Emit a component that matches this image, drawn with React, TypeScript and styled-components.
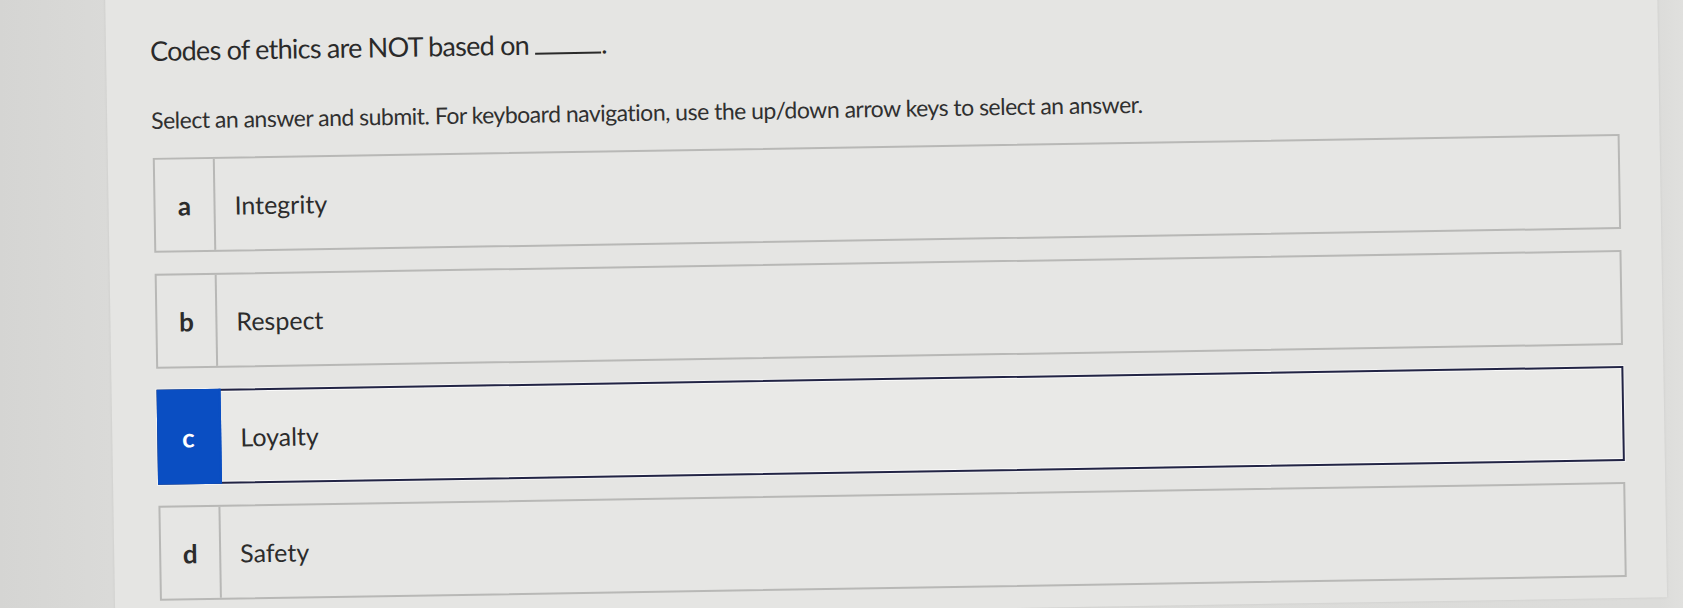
import React from 'react';
import styled, { createGlobalStyle } from 'styled-components';

const GlobalStyle = createGlobalStyle`
    html, body {
        margin: 0;
        padding: 0;
        width: 1683px;
        height: 608px;
        overflow: hidden;
        background: #d8d8d6;
        font-family: Lato, 'Liberation Sans', sans-serif;
    }
`;

const Screen = styled.div`
    display: flex;
    width: 1683px;
    height: 608px;
    overflow: hidden;
    background: linear-gradient(90deg, #d5d5d3 0px, #dadad8 110px, #dcdcda 1660px, #e0e0de 1683px);
`;

const Sheet = styled.div`
    flex: none;
    margin: -30px 0 0 110px;
    width: 1552px;
    height: 640px;
    box-sizing: border-box;
    padding: 52px 0 0 44px;
    background: #e5e5e3;
    box-shadow: 0 0 3px rgba(0, 0, 0, 0.08);
    transform: rotate(-0.93deg);
    transform-origin: 50% 50%;
`;

const Question = styled.div`
    color: #2a2a2a;
    font-size: 27px;
    line-height: 34px;
    font-weight: 400;
    letter-spacing: -0.75px;
`;

const Blank = styled.span`
    display: inline-block;
    width: 66px;
    height: 24px;
    margin-left: 6px;
    border-bottom: 2px solid #2a2a2a;
    vertical-align: baseline;
`;

const Hint = styled.div`
    margin-top: 38px;
    color: #303030;
    font-size: 23px;
    line-height: 29px;
    font-weight: 400;
    letter-spacing: -0.5px;
`;

const Options = styled.div`
    display: flex;
    flex-direction: column;
    gap: 21px;
    margin: 23px 0 0 1px;
    width: 1467px;
`;

const Option = styled.div<{ selected?: boolean }>`
    display: flex;
    align-items: stretch;
    height: 95px;
    box-sizing: border-box;
    border: 2px solid ${(p) => (p.selected ? '#222445' : '#b8b8b6')};
    background: ${(p) => (p.selected ? '#e9e9e7' : '#e6e6e4')};
    box-shadow: ${(p) =>
        p.selected ? 'inset 0 0 0 1px #fbfbfb, 0 0 0 1px #f4f4f4' : 'none'};
`;

const Letter = styled.div<{ selected?: boolean }>`
    display: flex;
    align-items: center;
    justify-content: center;
    flex: none;
    width: ${(p) => (p.selected ? '62px' : '58px')};
    margin: ${(p) => (p.selected ? '-2px 0 -2px -2px' : '0')};
    border-right: 2px solid ${(p) => (p.selected ? '#0a4ec2' : '#b8b8b6')};
    background: ${(p) => (p.selected ? '#0a4ec2' : 'transparent')};
    color: ${(p) => (p.selected ? '#ffffff' : '#2c2c2c')};
    font-size: 26px;
    font-weight: 700;
`;

const Label = styled.div`
    display: flex;
    align-items: center;
    padding-left: 19px;
    color: #2c2c2c;
    font-size: 25px;
    font-weight: 400;
`;

const answers = [
    { key: 'a', text: 'Integrity' },
    { key: 'b', text: 'Respect' },
    { key: 'c', text: 'Loyalty' },
    { key: 'd', text: 'Safety' },
];

function App() {
    const selected = 'c';

    return (
        <Screen>
            <GlobalStyle />
            <Sheet>
                <Question>
                    Codes of ethics are NOT based on
                    <Blank />.
                </Question>
                <Hint>
                    Select an answer and submit. For keyboard navigation, use the up/down arrow keys to select an answer.
                </Hint>
                <Options>
                    {answers.map((a) => (
                        <Option key={a.key} selected={a.key === selected}>
                            <Letter selected={a.key === selected}>{a.key}</Letter>
                            <Label>{a.text}</Label>
                        </Option>
                    ))}
                </Options>
            </Sheet>
        </Screen>
    );
}

export default App;
